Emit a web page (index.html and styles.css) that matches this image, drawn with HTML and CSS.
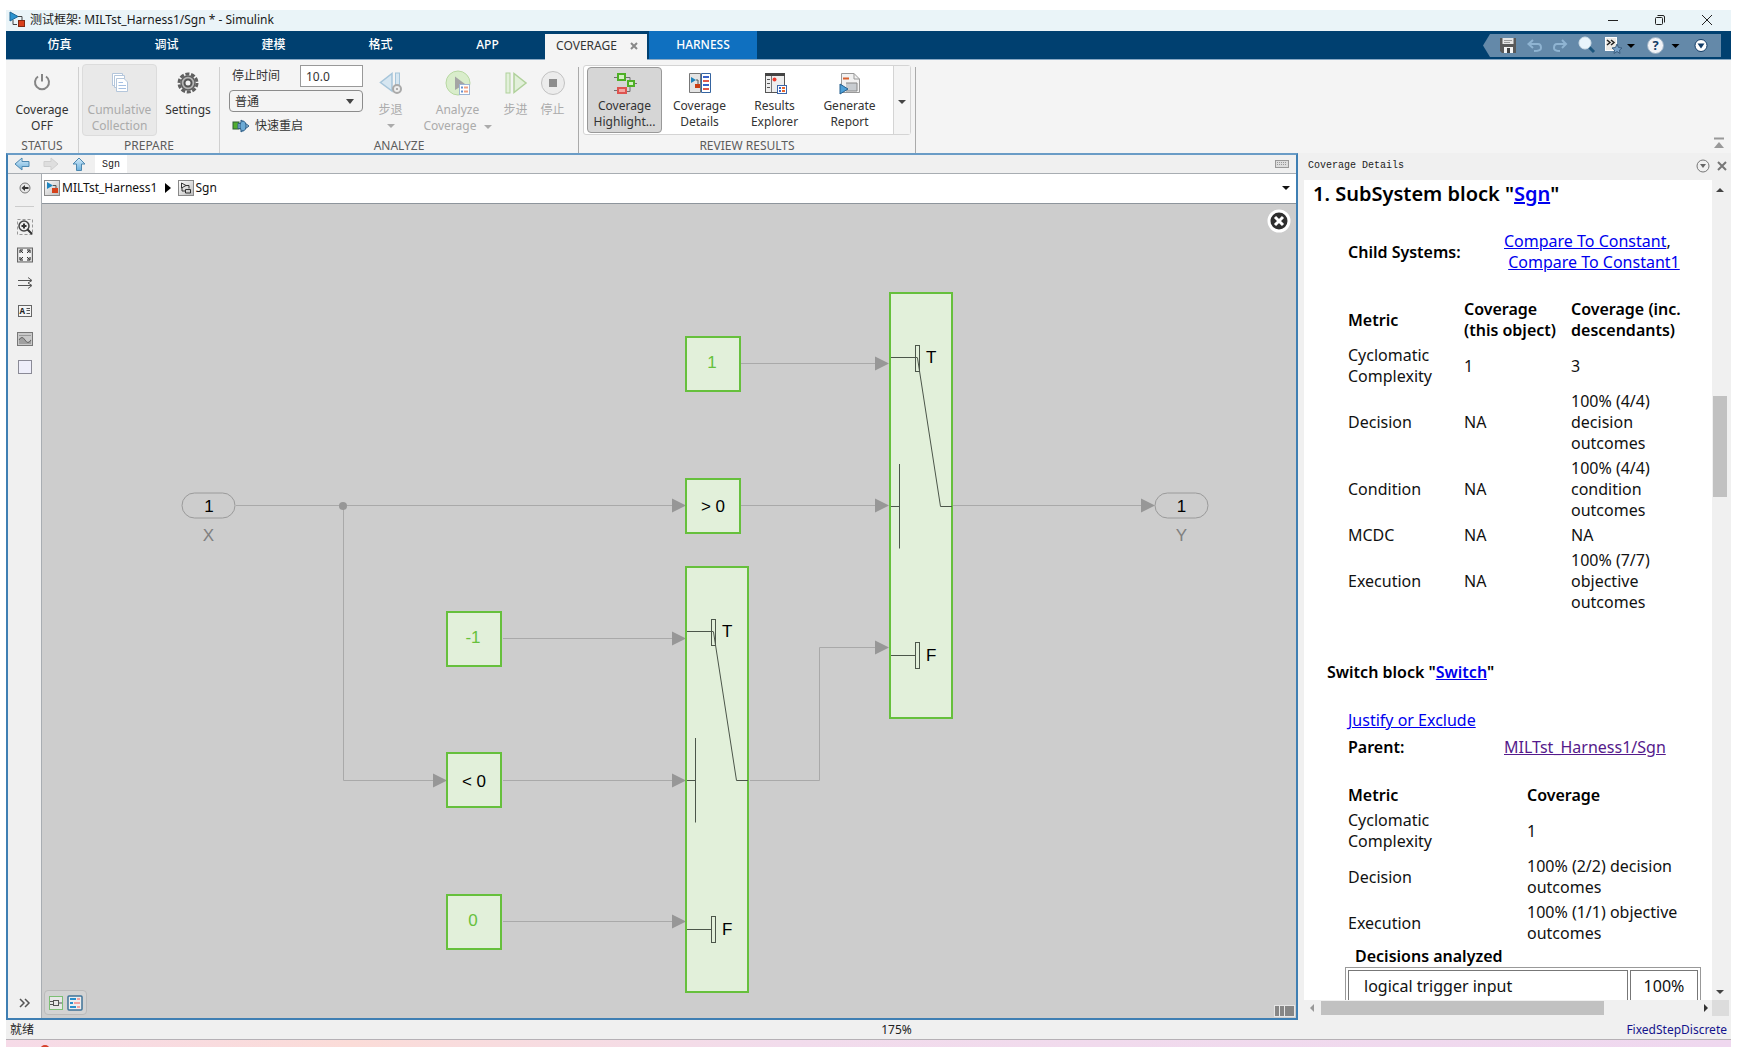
FILE: index.html
```html
<!DOCTYPE html>
<html lang="zh-CN">
<head>
<meta charset="utf-8">
<title>测试框架: MILTst_Harness1/Sgn * - Simulink</title>
<link rel="stylesheet" href="styles.css">
</head>
<body>
<svg class="defs" width="0" height="0" aria-hidden="true">
  <defs>
    <linearGradient id="blueArrow" x1="0" y1="0" x2="0" y2="1"><stop offset="0" stop-color="#d6ecfa"/><stop offset="1" stop-color="#6cb0dc"/></linearGradient>
    <linearGradient id="tile" x1="0" y1="0" x2="1" y2="1"><stop offset="0" stop-color="#ffffff"/><stop offset="1" stop-color="#bcbcbc"/></linearGradient>
    <g id="switch">
      <rect x="890" y="293" width="62" height="425" class="block"/>
      <g class="ink">
        <path d="M891 357.500H917.500"/>
        <rect x="915.500" y="345.500" width="4" height="26"/>
        <path d="M917.500 358L940.500 506.500H952"/>
        <path d="M899.500 464V548.500M891 506.500H899.500"/>
        <path d="M891 655.500H915.500"/>
        <rect x="915.500" y="642.500" width="4" height="26"/>
      </g>
      <text x="926" y="363" class="blk-text">T</text>
      <text x="926" y="661" class="blk-text">F</text>
    </g>
    <path id="head" d="M0 0L-14 -7V7Z"/>
  </defs>
</svg>

<div class="window">
  <header class="titlebar">
    <svg width="18" height="18" viewBox="0 0 18 18"><path d="M2 1L10 5.500L2 10Z" fill="#2b93cf" stroke="#1a6595"/><path d="M10 5.500H14V9M5 9V13.500H9" fill="none" stroke="#444"/><rect x="10.500" y="9.500" width="6" height="6" fill="#d9401c" stroke="#7e2a14"/></svg>
    <h1>测试框架: MILTst_Harness1/Sgn * - Simulink</h1>
    <div class="win-controls">
      <button aria-label="Minimize"><svg width="12" height="12" viewBox="0 0 12 12"><path d="M1 6.500H11"/></svg></button>
      <button aria-label="Restore"><svg width="12" height="12" viewBox="0 0 12 12"><rect x="1.500" y="3.500" width="7" height="7" rx="1"/><path d="M3.500 1.500H9A1.500 1.500 0 0 1 10.500 3V8.500"/></svg></button>
      <button aria-label="Close"><svg width="12" height="12" viewBox="0 0 12 12"><path d="M1 1L11 11M11 1L1 11"/></svg></button>
    </div>
  </header>

  <nav class="tabs">
    <a href="#sim">仿真</a><a href="#debug">调试</a><a href="#modeling">建模</a><a href="#format">格式</a><a href="#apps">APP</a>
    <a href="#coverage" class="active">COVERAGE <svg width="8" height="8" viewBox="0 0 8 8"><path d="M1 1L7 7M7 1L1 7" stroke="#888" stroke-width="2"/></svg></a>
    <a href="#harness" class="harness">HARNESS</a>
    <div class="quick">
      <svg width="238" height="23" viewBox="1483 34 238 23">
        <path d="M1483 45.500L1490 34H1721V57H1490Z" fill="#6489a9"/>
        <path d="M1500 38H1516V53H1502L1500 51Z" fill="#595959"/><rect x="1502.500" y="38" width="11" height="6" fill="#e5e5e5"/><path d="M1504 40.500H1512M1504 42.500H1510" stroke="#999"/><rect x="1504" y="47" width="9" height="6" fill="#f4f4f4"/><rect x="1507" y="48" width="3" height="5" fill="#444"/>
        <path d="M1533 40L1528.500 44L1533 48M1529 44H1538Q1541 44 1541 48Q1541 51 1534 51" fill="none" stroke="#8fb4d2" stroke-width="2"/>
        <path d="M1562 40L1566 44L1562 48M1566 44H1557Q1554 44 1554 48Q1554 51 1560 51" fill="none" stroke="#8fb4d2" stroke-width="2"/>
        <path d="M1588 46L1594 52" stroke="#1c567e" stroke-width="3"/><circle cx="1585" cy="43" r="6" fill="#e9f4fb" stroke="#d0dfe9"/>
        <rect x="1605.500" y="37.500" width="11" height="13" fill="#eceae6" stroke="#fff"/><path d="M1607 40L1610 42.500L1607 45M1611 40L1614 42.500L1611 45" fill="none" stroke="#222" stroke-width="1.500"/><path d="M1617 44L1618.500 47.500L1622 48L1619.500 50L1620 53.500L1617 51.500L1614 53.500L1614.500 50L1612 48L1615.500 47.500Z" fill="#7aa3c9" stroke="#3d5f80"/>
        <path d="M1627 44H1635L1631 48Z" fill="#000"/>
        <circle cx="1655.500" cy="45.500" r="8" fill="#f1f3f6" stroke="#9bb0c4"/><text x="1655.500" y="50" class="qmark">?</text>
        <path d="M1671.500 44H1679.500L1675.500 48Z" fill="#000"/>
        <circle cx="1701" cy="45.500" r="6" fill="#fff" stroke="#123c66" stroke-width="1"/><path d="M1697.500 43.500H1704.500L1701 48.500Z" fill="#123c66"/>
      </svg>
    </div>
  </nav>

  <section class="strip">
    <div class="group g-status">
      <div class="tools">
        <button class="tool"><svg width="24" height="24" viewBox="0 0 24 24" fill="none" stroke="#858585" stroke-width="2"><path d="M8 5.500A7 7 0 1 0 16 5.500M12 3V10.500"/></svg><span>Coverage<br>OFF</span></button>
      </div>
      <h2>STATUS</h2>
    </div>
    <div class="group g-prepare">
      <div class="tools">
        <button class="tool pressed-off" disabled><svg width="24" height="24" viewBox="0 0 24 24"><g fill="#fff" stroke="#b4c6db"><path d="M4.500 2.500H14.500V14.500H4.500Z"/><path d="M6.500 4.500H16.500V16.500H6.500Z"/><path d="M8.500 7.500H16L19.500 11V20.500H8.500Z"/></g><path d="M10.500 11.500H15M10.500 14.500H18M10.500 17.500H18" stroke="#a6c0e2"/></svg><span>Cumulative<br>Collection</span></button>
        <button class="tool"><svg width="24" height="24" viewBox="0 0 24 24"><circle cx="12" cy="12" r="9" fill="none" stroke="#606060" stroke-width="3" stroke-dasharray="4 1.650"/><circle cx="12" cy="12" r="7" fill="#b5b5b5" stroke="#606060" stroke-width="1.500"/><circle cx="12" cy="12" r="3.500" fill="#f4f4f4" stroke="#555" stroke-width="2"/></svg><span>Settings</span></button>
      </div>
      <h2>PREPARE</h2>
    </div>
    <div class="group g-analyze">
      <div class="tools">
        <form class="fields">
          <div class="time"><label for="stop">停止时间</label><input id="stop" type="text" value="10.0"></div>
          <div class="mode"><select aria-label="仿真模式"><option>普通</option></select></div>
          <button type="button" class="restart"><svg width="18" height="14" viewBox="0 0 18 14"><rect x="1" y="3" width="6" height="7" fill="#52ae30" stroke="#2c5f34"/><path d="M6 4.500H9V1L17 7L9 13V9.500H6Z" fill="#8dbbd9" stroke="#31618a"/><ellipse cx="11" cy="7" rx="3" ry="5" fill="#6cabd6" stroke="#31618a"/></svg>快速重启</button>
        </form>
        <button class="tool t-back" disabled><svg width="24" height="24" viewBox="0 0 24 24"><path d="M13 2.500V20L1.500 11.500Z" fill="#d6e6f1" stroke="#a6c5da" stroke-width="1.500"/><rect x="16.500" y="2" width="4" height="17" fill="#d6e6f1" stroke="#a6c5da"/><circle cx="18" cy="18" r="4" fill="#eee" stroke="#aaa" stroke-width="2"/><circle cx="18" cy="18" r="1" fill="#999"/></svg><span>步退</span><i class="caret"></i></button>
        <button class="tool t-run" disabled><svg width="26" height="26" viewBox="0 0 26 26"><circle cx="13" cy="13" r="12" fill="#d9edcb" stroke="#b8d8a2"/><path d="M10 6.500L20 14L10 20Z" fill="#a4a4a4"/><rect x="14.500" y="14.500" width="10" height="10" fill="#fff" stroke="#9db4d4"/><path d="M16 17.500H18M16 21.500H18" stroke="#6791cf" stroke-width="2"/><path d="M19 17.500H23M19 21.500H23" stroke="#efa183" stroke-width="2"/></svg><span>Analyze<br>Coverage <i class="caret"></i></span></button>
        <button class="tool t-fwd" disabled><svg width="24" height="24" viewBox="0 0 24 24"><rect x="2" y="2" width="4" height="20" fill="#e2f0da" stroke="#b0d19b"/><path d="M10 2.500V21.500L22 12Z" fill="#e2f0da" stroke="#b0d19b" stroke-width="1.500"/></svg><span>步进</span></button>
        <button class="tool t-stop" disabled><svg width="24" height="24" viewBox="0 0 24 24"><circle cx="12" cy="12" r="11.500" fill="#ececec" stroke="#c2c2c2"/><rect x="8" y="8" width="8" height="8" fill="#8d8d8d"/></svg><span>停止</span></button>
      </div>
      <h2>ANALYZE</h2>
    </div>
    <div class="group g-review">
      <div class="gallery">
        <button class="tool selected"><svg width="24" height="24" viewBox="0 0 24 24" fill="none"><path d="M1 6.500H5M12 6.500H17V9.500M22 12.500H24M17 15V20.500H13M1 19.500H5M12 6.500H16" stroke="#707070"/><rect x="5" y="3" width="7" height="6" fill="#d4f0c4" stroke="#4eb026" stroke-width="2"/><rect x="15" y="10" width="6" height="5" fill="#d4f0c4" stroke="#4eb026" stroke-width="2"/><rect x="5" y="17" width="8" height="5" fill="#f3a6a2" stroke="#de5450" stroke-width="2"/></svg><span>Coverage<br>Highlight...</span></button>
        <button class="tool"><svg width="24" height="24" viewBox="0 0 24 24"><path d="M1.500 2.500H12.500V21.500H1.500Z" fill="#e4e4e4" stroke="#777"/><path d="M13.500 2.500H22.500V21.500H13.500Z" fill="#fff" stroke="#3564a0"/><path d="M3 6L8 9L3 12Z" fill="#1d83bb"/><path d="M8 9H10V13" stroke="#555" fill="none"/><rect x="7" y="13" width="5" height="4" fill="#cc3e12"/><path d="M15 6H21M15 14H21" stroke="#3a62c8" stroke-width="2"/><path d="M15 10H21M15 18H21" stroke="#e0574a" stroke-width="2"/></svg><span>Coverage<br>Details</span></button>
        <button class="tool"><svg width="24" height="24" viewBox="0 0 24 24"><rect x="2.500" y="2.500" width="19" height="19" fill="#eee" stroke="#555"/><path d="M2 3.500H22" stroke="#444" stroke-width="3"/><path d="M8.500 5V21" stroke="#777"/><path d="M4 8.500H7M4 12.500H7M4 16.500H7" stroke="#555"/><circle cx="11.500" cy="8.500" r="2" fill="#ee3b2f"/><rect x="14.500" y="14.500" width="9" height="8" fill="#fff" stroke="#3c66a8"/><path d="M16 17H18M16 20H18" stroke="#3c66c8" stroke-width="2"/><path d="M19 17H22M19 20H22" stroke="#e8642c" stroke-width="2"/></svg><span>Results<br>Explorer</span></button>
        <button class="tool"><svg width="24" height="24" viewBox="0 0 24 24"><path d="M3.500 2.500H16L21.500 8V21.500H3.500Z" fill="#f2f2f2" stroke="#999"/><path d="M16 2.500V8H21.500" fill="none" stroke="#999"/><path d="M5 7.500H11" stroke="#d9602f" stroke-width="2"/><path d="M8 12H19V20H8" fill="#c8ccd0" stroke="#888"/><path d="M2 13L10 18L2 23Z" fill="#4da0d8" stroke="#245e8e"/></svg><span>Generate<br>Report</span></button>
        <button class="more" aria-label="More"><i class="caret"></i></button>
      </div>
      <h2>REVIEW RESULTS</h2>
    </div>
    <button class="collapse" aria-label="Collapse"><svg width="12" height="12" viewBox="0 0 12 12"><path d="M1 1.500H11" stroke="#999" stroke-width="2"/><path d="M1 11L6 5L11 11Z" fill="#999"/></svg></button>
  </section>

  <main class="work">
    <section class="editor">
      <div class="doc-tabs">
        <button aria-label="Back"><svg width="16" height="14" viewBox="0 0 16 14"><path d="M1 7L8 1V4.500H15V9.500H8V13Z" fill="url(#blueArrow)" stroke="#4d88b0"/></svg></button>
        <button aria-label="Forward"><svg width="16" height="14" viewBox="0 0 16 14"><path d="M15 7L8 1V4.500H1V9.500H8V13Z" fill="#dedede" stroke="#cfcfcf"/></svg></button>
        <button aria-label="Up"><svg width="14" height="14" viewBox="0 0 14 14"><path d="M7 1L13 7H9.500V13.500H4.500V7H1Z" fill="url(#blueArrow)" stroke="#4d88b0"/></svg></button>
        <a href="#sgn" class="doc">Sgn</a>
        <svg class="kbd" width="14" height="8" viewBox="0 0 14 8"><rect x=".5" y=".5" width="13" height="7" fill="#ddd" stroke="#999"/><path d="M2 2.500H12M2 4.500H12" stroke="#999" stroke-dasharray="1 1"/></svg>
      </div>
      <aside class="palette">
        <button aria-label="Hide browser"><svg width="12" height="12" viewBox="0 0 12 12"><circle cx="6" cy="6" r="5" fill="#e8e8e8" stroke="#777"/><path d="M2.500 6L6 3V5H9.500V7H6V9Z" fill="#333"/></svg></button>
        <hr>
        <button aria-label="Zoom"><svg width="18" height="18" viewBox="0 0 18 18" fill="none"><rect x="1.500" y="1.500" width="15" height="15" stroke="#999" stroke-dasharray="3 2"/><circle cx="8" cy="8" r="5" fill="#eee" stroke="#444" stroke-width="1.500"/><path d="M5.500 8H10.500M8 5.500V10.500M11.500 11.500L16 16" stroke="#333" stroke-width="2"/></svg></button>
        <button aria-label="Fit to view"><svg width="18" height="18" viewBox="0 0 18 18" fill="none"><rect x="1.500" y="2" width="15" height="14" fill="#d5d5d5" stroke="#666"/><path d="M9 3V15M3 9H15" stroke="#f4f4f4" stroke-width="4"/><path d="M4 7V4H7M4.500 4.500L7 7M11 4H14V7M13.500 4.500L11 7M4 11V14H7M4.500 13.500L7 11M14 11V14H11M13.500 13.500L11 11" stroke="#333"/></svg></button>
        <button aria-label="Sample time"><svg width="18" height="18" viewBox="0 0 18 18" fill="none" stroke="#555"><path d="M2 6.500H15M12 3.500L16 6.500L12 9M2 11.500H15M12 9L16 11.500L12 14.500"/></svg></button>
        <button aria-label="Annotation"><svg width="18" height="18" viewBox="0 0 18 18"><rect x="2.500" y="3.500" width="13" height="11" fill="#f4f4f4" stroke="#666"/><text x="3.500" y="12" class="mini">A</text><path d="M10.500 6.500H14M10.500 8.500H14M10.500 11.500H14" stroke="#555"/></svg></button>
        <button aria-label="Image"><svg width="18" height="18" viewBox="0 0 18 18"><rect x="1.500" y="2.500" width="15" height="13" fill="#c9c9c9" stroke="#777"/><path d="M3 5.500H15" stroke="#999"/><path d="M3 14V9Q6 5 9 10T15 9V14Z" fill="#a0a0a0"/><path d="M3 10Q6 5 9 10T15 10" fill="none" stroke="#666"/></svg></button>
        <button aria-label="Area"><svg width="18" height="18" viewBox="0 0 18 18"><rect x="2.500" y="2.500" width="13" height="13" fill="#eeeefa" stroke="#8a8a96"/></svg></button>
        <button class="expand" aria-label="Expand"><svg width="12" height="10" viewBox="0 0 12 10"><path d="M1 1L5 5L1 9M6 1L10 5L6 9" fill="none" stroke="#555" stroke-width="1.500"/></svg></button>
      </aside>
      <div class="crumbs">
        <svg width="16" height="16" viewBox="0 0 16 16"><rect x=".5" y=".5" width="15" height="15" fill="url(#tile)" stroke="#888"/><path d="M3 2L9 5.500L3 9Z" fill="#1f86c0"/><path d="M9 5.500H12V8" fill="none" stroke="#555"/><rect x="8" y="8" width="6" height="5" fill="#d5421b"/></svg>
        <a href="#harness1">MILTst_Harness1</a>
        <svg class="sep" width="6" height="10" viewBox="0 0 6 10"><path d="M0 0L6 5L0 10Z"/></svg>
        <svg width="16" height="16" viewBox="0 0 16 16"><rect x=".5" y=".5" width="15" height="15" fill="url(#tile)" stroke="#888"/><path d="M3.500 3L8 5.500L3.500 8ZM8 5.500H11V8.500M7.500 9.500H12.500V13H7.500ZM4 8V11H7.500" fill="none" stroke="#333"/></svg>
        <a href="#sgn">Sgn</a>
        <i class="caret dark"></i>
      </div>
      <div class="canvas">
        <svg class="diagram" width="100%" height="100%">
          <g transform="translate(-42 -204)">
            <g class="wire">
              <path d="M236 505.500H675M343.500 506V780.500H436M503 780.500H675M503 638.500H675M503 921.500H675M741 363.500H878M741 505.500H878M750 780.500H819.500V647.500H878M953 505.500H1143"/>
            </g>
            <g class="heads">
              <use href="#head" x="686" y="505.500"/><use href="#head" x="447" y="780.500"/><use href="#head" x="686" y="780.500"/><use href="#head" x="686" y="638.500"/><use href="#head" x="686" y="921.500"/><use href="#head" x="889" y="363.500"/><use href="#head" x="889" y="505.500"/><use href="#head" x="889" y="647.500"/><use href="#head" x="1155" y="505.500"/>
              <circle cx="343" cy="506" r="4"/>
            </g>
            <rect x="182" y="493" width="53" height="25" rx="12.500" class="port"/>
            <rect x="1155" y="493" width="53" height="25" rx="12.500" class="port"/>
            <text x="209" y="512" class="blk-text mid">1</text><text x="208.500" y="541" class="blk-text mid name">X</text>
            <text x="1181.500" y="512" class="blk-text mid">1</text><text x="1181.500" y="541" class="blk-text mid name">Y</text>
            <g class="block">
              <rect x="686" y="337" width="54" height="54"/><rect x="686" y="479" width="54" height="54"/>
              <rect x="447" y="612" width="54" height="54"/><rect x="447" y="753" width="54" height="54"/><rect x="447" y="895" width="54" height="54"/>
            </g>
            <text x="712" y="368" class="blk-text mid green">1</text>
            <text x="713" y="512" class="blk-text mid">&gt; 0</text>
            <text x="473" y="643" class="blk-text mid green">-1</text>
            <text x="474" y="787" class="blk-text mid">&lt; 0</text>
            <text x="473" y="926" class="blk-text mid green">0</text>
            <use href="#switch"/>
            <use href="#switch" x="-204" y="274"/>
          </g>
        </svg>
        <button class="close-hl" aria-label="Close highlighting"><svg width="24" height="24" viewBox="0 0 24 24"><circle cx="12" cy="12" r="10" fill="#2e2e2e" stroke="#fff" stroke-width="3"/><path d="M8 8L16 16M16 8L8 16" stroke="#fff" stroke-width="3"/></svg></button>
        <div class="badges">
          <svg width="16" height="16" viewBox="0 0 16 16" fill="none"><rect x="1.500" y="1.500" width="13" height="13" fill="#e8e8e8" stroke="#7cbf74"/><rect x="5.500" y="5.500" width="5" height="5" stroke="#555"/><path d="M2 6.500H5M2 9.500H5M11 8H14" stroke="#555"/></svg>
          <svg width="16" height="16" viewBox="0 0 16 16"><rect x="1" y="1" width="14" height="14" rx="1" fill="#eee" stroke="#3f7398" stroke-width="1.500"/><path d="M3 4H9M3 8H6M3 12H9" stroke="#2a8ecb" stroke-width="2"/><path d="M10 4H13M7 8H13M10 12H13" stroke="#f2a3a0" stroke-width="2"/></svg>
        </div>
        <svg class="bars" width="21" height="12" viewBox="0 0 21 12"><rect width="21" height="12" fill="#e6e6e6"/><path d="M1 1H5V11H1ZM6 1H10V11H6ZM11 1H20V11H11Z" fill="#868686"/></svg>
      </div>
    </section>

    <aside class="details">
      <header>
        <h2>Coverage Details</h2>
        <button aria-label="Options"><svg width="14" height="14" viewBox="0 0 14 14"><circle cx="7" cy="7" r="6" fill="none" stroke="#777"/><path d="M4 5H10L7 9Z" fill="#666"/></svg></button>
        <button aria-label="Close"><svg width="10" height="10" viewBox="0 0 10 10"><path d="M1 1L9 9M9 1L1 9" stroke="#777" stroke-width="2"/></svg></button>
      </header>
      <article class="report">
        <h3>1. SubSystem block "<a href="#sgn">Sgn</a>"</h3>
        <table class="info children">
          <tr><th>Child Systems:</th><td><a href="#c">Compare To Constant</a>,<br>&nbsp;<a href="#c1">Compare To Constant1</a></td></tr>
        </table>
        <table class="metrics three">
          <tr><th>Metric</th><th>Coverage<br>(this object)</th><th>Coverage (inc.<br>descendants)</th></tr>
          <tr><td>Cyclomatic<br>Complexity</td><td>1</td><td>3</td></tr>
          <tr><td>Decision</td><td>NA</td><td>100% (4/4)<br>decision<br>outcomes</td></tr>
          <tr><td>Condition</td><td>NA</td><td>100% (4/4)<br>condition<br>outcomes</td></tr>
          <tr><td>MCDC</td><td>NA</td><td>NA</td></tr>
          <tr><td>Execution</td><td>NA</td><td>100% (7/7)<br>objective<br>outcomes</td></tr>
        </table>
        <h4>Switch block "<a href="#switch-block">Switch</a>"</h4>
        <p><a href="#justify">Justify or Exclude</a></p>
        <table class="info parent">
          <tr><th>Parent:</th><td><a href="#parent" class="seen">MILTst_Harness1/Sgn</a></td></tr>
        </table>
        <table class="metrics two">
          <tr><th>Metric</th><th>Coverage</th></tr>
          <tr><td>Cyclomatic<br>Complexity</td><td>1</td></tr>
          <tr><td>Decision</td><td>100% (2/2) decision<br>outcomes</td></tr>
          <tr><td>Execution</td><td>100% (1/1) objective<br>outcomes</td></tr>
        </table>
        <h5>Decisions analyzed</h5>
        <table class="decisions">
          <tr><td>logical trigger input</td><td>100%</td></tr>
        </table>
      </article>
      <div class="vbar"><i class="up"></i><div class="thumb"></div><i class="down"></i></div>
      <div class="hbar"><i class="left"></i><div class="thumb"></div><i class="right"></i></div>
      <div class="corner"></div>
    </aside>
  </main>

  <footer class="status"><span>就绪</span><span>175%</span><span class="solver">FixedStepDiscrete</span></footer>
  <div class="taskbar"><i></i></div>
</div>
</body>
</html>
```
FILE: styles.css
```css
* { box-sizing: border-box; }
body {
  margin: 0;
  height: 100vh;
  padding: 10px 18px 2px 6px;
  background: #fff;
  color: #222;
  font: 13px/16px "Noto Sans", "Noto Sans CJK SC", sans-serif;
  overflow: hidden;
}
.defs { position: absolute; }
svg { display: block; flex: none; }
h1, h2, h3, h4, h5, p { margin: 0; font-weight: 400; font-size: 13px; }
button { border: 0; padding: 0; background: none; color: inherit; font: inherit; }
a { color: inherit; text-decoration: none; }
.window { height: 100%; display: grid; grid-template-rows: 21px 29px 93px minmax(0, 1fr) 20px 7px; }

.titlebar { display: flex; align-items: center; gap: 4px; padding: 0 0 2px 2px; background: #eaf4f8; }
.titlebar h1 { flex: 1; font-size: 12px; color: #1a1a1a; }
.win-controls { display: flex; gap: 35px; padding-right: 18px; }
.win-controls svg { fill: none; stroke: #222; }

.tabs { display: flex; background: #004070; color: #fff; border-bottom: 1px solid #8aa9c4; font-weight: 500; }
.tabs a { width: 107px; display: flex; align-items: center; justify-content: center; font-size: 12px; }
.tabs a.active { width: 102px; margin: 3px 2px -1px 4px; padding: 0 0 3px 2px; gap: 13px; background: #f4f4f4; color: #333; font-weight: 400; }
.tabs a.harness { width: 108px; background: #0f70c0; }
.quick { margin-left: auto; padding: 3px 10px 0 0; }
.qmark { font: bold 13px "Open Sans", sans-serif; text-anchor: middle; fill: #123c66; }

.strip { display: flex; background: #f4f4f4; color: #333; }
.group { display: flex; flex-direction: column; justify-content: space-between; margin: 7px 0 0; border-right: 1px solid #d0d0d0; }
.group h2 { text-align: center; font-size: 12px; line-height: 14px; color: #5c5c5c; }
.g-status { width: 73px; }
.g-prepare { width: 141px; padding: 0 3px; }
.g-analyze { width: 359px; padding: 0 9px; border-color: #aaa; }
.g-review { width: 337px; padding: 0 4px; border-color: #aaa; }
.tools { display: flex; height: 72px; margin-top: -3px; }
.tool { flex: none; width: 75px; height: 72px; display: flex; flex-direction: column; align-items: center; padding-top: 7px; font-size: 12px; line-height: 16px; text-align: center; white-space: nowrap; }
.tool svg { margin-bottom: 7px; }
.g-status .tool { width: 72px; }
.g-prepare .tool + .tool { width: 62px; }
.pressed-off { border: 1px solid #dcdcdc; border-radius: 4px; background: #e9e9e9; padding-top: 6px; }
.tool:disabled { color: #ababab; }
.caret { display: inline-block; width: 0; height: 0; border: 4px solid transparent; border-top-color: currentColor; border-bottom: 0; vertical-align: middle; }
.tool.t-back { width: 55px; }
.t-back .caret { margin-top: 6px; }
.tool.t-run { width: 79px; padding-top: 6px; }
.t-run svg { margin-bottom: 6px; }
.t-run .caret { margin-left: 4px; }
.tool.t-fwd { width: 37px; }
.tool.t-stop { width: 37px; }
.fields { width: 134px; flex: none; display: flex; flex-direction: column; gap: 3px; margin: 1px 0 0; }
.time { display: flex; justify-content: space-between; align-items: center; padding-left: 3px; font-size: 12px; }
.time input { width: 63px; height: 22px; border: 1px solid #999; padding: 0 5px; background: #fff; color: #333; font: 12px "Noto Sans", sans-serif; }
.mode { position: relative; }
.mode::after { content: ""; position: absolute; right: 9px; top: 9px; border: 4px solid transparent; border-top: 5px solid #444; border-bottom: 0; }
.mode select { display: block; width: 100%; height: 22px; appearance: none; border: 1px solid #8c8c8c; border-radius: 4px; background: #f4f4f4; color: #333; padding: 0 5px; font: 12px "Noto Sans", "Noto Sans CJK SC", sans-serif; }
.restart { display: flex; align-items: center; gap: 5px; padding-left: 3px; font-size: 12px; height: 22px; }
.gallery { display: flex; height: 70px; margin-top: -2px; border: 1px solid #d4d4d4; border-radius: 3px; background: #fff; padding-left: 3px; }
.gallery .tool { height: 66px; margin-top: 1px; padding-top: 4px; }
.gallery .tool svg { margin-bottom: 3px; }
.gallery .selected { border: 1px solid #999; border-radius: 4px; background: #d6d6d6; padding-top: 3px; }
.more { flex: 1; margin-left: 6px; border-left: 1px solid #d4d4d4; background: #f4f4f4; color: #444; }
.collapse { margin-left: auto; padding: 0 6px 4px 0; align-self: flex-end; }

.work { display: grid; grid-template: minmax(0, 1fr) / minmax(0, 1fr) 433px; min-height: 0; }
.editor { display: grid; grid-template: 19px 30px minmax(0, 1fr) / 34px minmax(0, 1fr); min-height: 0; border: 2px solid #3f7fb3; border-top-color: #6a9cc6; background: #f0f0f0; }
.doc-tabs { grid-column: 1 / 3; display: flex; align-items: center; border-bottom: 1px solid #a8adb2; padding: 0 7px 0 6px; }
.doc-tabs button { width: 29px; }
.doc-tabs button:nth-child(3) { width: 23px; }
.doc { width: 32px; align-self: stretch; background: #fff; text-align: center; font: 10px/20px "Liberation Mono", monospace; }
.kbd { margin-left: auto; }
.palette { grid-row: 2 / 4; display: flex; flex-direction: column; align-items: center; gap: 10px; padding-top: 8px; border-right: 1px solid #a8adb2; }
.palette hr { width: 19px; margin: 2px 0 0; border: 0; border-top: 1px solid #ccc; }
.palette hr + button { margin-top: 1px; }
.palette .expand { margin: auto 0 10px; }
.mini { font: bold 8px "Open Sans", sans-serif; fill: #222; }
.crumbs { display: flex; align-items: center; gap: 2px; padding: 0 6px 2px 2px; background: #fff; border-bottom: 1px solid #8e959c; color: #111; font-size: 12px; }
.crumbs .sep { margin: 0 5px; }
.crumbs .caret { margin-left: auto; }
.canvas { position: relative; min-height: 0; background: #cdcdcd; overflow: hidden; }
.diagram { position: absolute; inset: 0; }
.wire { fill: none; stroke: #a9a9a9; stroke-width: 1; }
.heads { fill: #979797; }
.port { fill: #cdcdcd; stroke: #9a9a9a; }
.block { fill: #e2f0da; stroke: #66c03c; stroke-width: 2; }
.ink { fill: none; stroke: #4c564a; stroke-width: 1; }
.blk-text { font: 17px "Liberation Sans", Arial, sans-serif; fill: #000; }
.mid { text-anchor: middle; }
.name { fill: #808080; }
.green { fill: #66c03c; }
.close-hl { position: absolute; top: 5px; right: 5px; }
.badges { position: absolute; left: 2px; bottom: 3px; display: flex; gap: 3px; align-items: center; height: 25px; padding: 0 3px; border: 1px solid #bbb; border-radius: 4px; background: #d3d3d3; }
.bars { position: absolute; right: 1px; bottom: 1px; }

.details { display: grid; grid-template: 27px minmax(0, 1fr) 16px 4px / minmax(0, 1fr) 19px; min-height: 0; padding-left: 6px; background: #f0f0f0; }
.details header { grid-column: 1 / 3; display: flex; align-items: center; gap: 7px; padding: 0 4px 2px 4px; }
.details header h2 { flex: 1; font: 10px "Liberation Mono", monospace; }
.report { overflow: hidden; background: #fff; color: #111; font-size: 16px; line-height: 21px; white-space: nowrap; padding-left: 9px; }
.report a { color: #0000ee; text-decoration: underline; }
.report a.seen { color: #551a8b; }
.report h3 { font-size: 20px; line-height: 28px; font-weight: 600; color: #000; }
.report table { border-collapse: collapse; margin-left: 35px; table-layout: fixed; }
.report th { text-align: left; font-weight: 600; color: #000; }
.report th, .report td { padding: 2px 0; }
.info { width: 352px; }
.info th { width: 156px; }
.children { margin-top: 21px; }
.metrics { width: 352px; }
.three { margin-top: 22px; }
.three th:first-child { width: 116px; }
.three th:nth-child(2) { width: 107px; }
.two th:first-child { width: 179px; }
.two { margin-top: 23px; }
.report h4 { margin: 45px 0 0 14px; font-size: 16px; line-height: 25px; font-weight: 600; color: #000; }
.report p { margin: 23px 0 0 35px; font-size: 16px; line-height: 25px; }
.report .parent { margin-top: 2px; }
.report h5 { margin: 0 0 0 42px; font-size: 16px; line-height: 21px; font-weight: 600; color: #000; }
.report .decisions { width: 356px; height: 50px; margin-left: 32px; border: 1px solid #999; border-collapse: separate; border-spacing: 2px; }
.report .decisions td { border: 1px solid #777; padding: 5px 15px; vertical-align: top; }
.report .decisions td:last-child { width: 68px; padding: 5px 0; text-align: center; }
.details i { width: 0; height: 0; border: 4px solid transparent; }
.vbar { display: flex; flex-direction: column; align-items: center; padding: 4px 3px 0 0; }
.vbar .thumb { width: 14px; height: 101px; margin-top: 204px; background: #c1c1c1; }
.details .up { border-bottom-color: #444; border-top: 0; margin-top: 4px; }
.details .down { border-top-color: #444; border-bottom: 0; margin: auto 0 6px; }
.hbar { display: flex; align-items: center; padding: 0 4px 0 6px; }
.hbar .thumb { width: 283px; height: 14px; margin-left: 7px; background: #c1c1c1; }
.details .left { border-right-color: #999; border-left: 0; }
.details .right { border-left-color: #333; border-right: 0; margin-left: auto; }
.corner { background: #dcdcdc; margin-right: 2px; }

.status { display: grid; grid-template-columns: 1fr auto 1fr; align-items: center; padding: 0 4px; background: #f0f0f0; border-bottom: 1px solid #b5b0b5; font-size: 12px; color: #222; }
.status > :nth-child(2) { margin-left: 56px; }
.solver { text-align: right; color: #14148c; }
.taskbar { background: linear-gradient(90deg, #f6dbe8, #fbdcd8 20%, #f2dcec 45%, #efd8ef); overflow: hidden; }
.taskbar i { display: block; width: 10px; height: 10px; margin: 5px 0 0 34px; border-radius: 5px; background: #d6402c; }
```
